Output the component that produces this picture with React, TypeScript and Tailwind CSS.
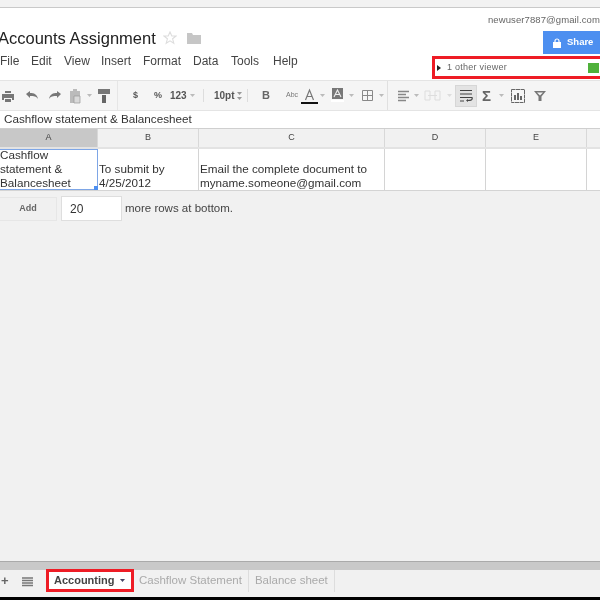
import React from "react";

const Caret = ({ c = "#999" }: { c?: string }) => (
  <svg width="5" height="3" viewBox="0 0 5 3" className="shrink-0"><path d="M0 0h5L2.5 3z" fill={c} /></svg>
);

const Ic = ({ w = 16, h = 16, children }: { w?: number; h?: number; children: React.ReactNode }) => (
  <svg width={w} height={h} viewBox={`0 0 ${w} ${h}`} className="shrink-0">{children}</svg>
);

const menus = [
  ["File", "w-[31px]"],
  ["Edit", "w-[33px]"],
  ["View", "w-[37px]"],
  ["Insert", "w-[42px]"],
  ["Format", "w-[50px]"],
  ["Data", "w-[38px]"],
  ["Tools", "w-[42px]"],
  ["Help", "w-[30px]"],
];

function Toolbar() {
  return (
    <div className="h-[30px] bg-[#f5f5f5] border-t border-[#e4e4e4] flex items-center text-[#555] font-bold text-[10px]">
      <div className="w-[118px] h-full flex items-center pl-[1px] border-r border-[#e6e6e6]">
        <div className="w-[24px]"><Ic w={14} h={14}><path d="M4 2h6v2H4zM1 5h12v6h-2V9H3v2H1zM4 10h6v3H4z" fill="#777" /></Ic></div>
        <div className="w-[23px]"><Ic w={14} h={12}><path d="M1 4l4-3v2c4 0 7 1 8 6-2-3-4-3-8-3v2z" fill="#777" /></Ic></div>
        <div className="w-[21px]"><Ic w={14} h={12}><path d="M13 4L9 1v2C5 3 2 4 1 9c2-3 4-3 8-3v2z" fill="#777" /></Ic></div>
        <div className="w-[18px]"><Ic w={12} h={16}><path d="M1 3h3V1h4v2h3v12H1z" fill="#bbb" /><path d="M5 8h6v7H5z" fill="#d9d9d9" stroke="#999" strokeWidth="0.7" /></Ic></div>
        <div className="w-[11px]"><Caret c="#bbb" /></div>
        <Ic w={13} h={16}><path d="M0 1h12v5H0z" fill="#777" /><path d="M4 7h4v8H4z" fill="#666" /></Ic>
      </div>
      <div className="w-[85px] h-full flex items-center pl-[15px]">
        <span className="w-[21px] text-[9px]">$</span>
        <span className="w-[16px] text-[9px]">%</span>
        <span className="w-[20px]">123</span>
        <Caret c="#bbb" />
      </div>
      <div className="w-[45px] h-[13px] flex items-center pl-[10px] border-l border-[#ddd] border-r gap-[2px]">
        <span>10pt</span>
        <span className="flex flex-col gap-[2px]"><Caret /><Caret /></span>
      </div>
      <div className="w-[32px] pl-[14px]">
        <span className="text-[11px] text-[#666]">B</span>
      </div>
      <div className="w-[20px] pl-[6px] text-[7px] font-normal text-[#777]">Abc</div>
      <div className="w-[18px] h-[18px] flex flex-col items-center">
        <Ic w={17} h={15}><path d="M4.500 13L8.500 3 12.500 13M6 9.500h5" fill="none" stroke="#777" strokeWidth="1.200" /></Ic>
        <div className="w-[17px] h-[2px] bg-[#111]" />
      </div>
      <div className="w-[12px] pl-[2px] flex"><Caret c="#bbb" /></div>
      <div className="w-[16px] pl-[1px] pb-[3px]">
        <Ic w={15} h={15}>
          <path d="M1 1h11v11H1z" fill="#777" />
          <path d="M3 10L6.500 3 10 10M4.500 7.500h4" fill="none" stroke="#eee" strokeWidth="1.100" />
          <path d="M0 13h13v2H0z" fill="#fff" />
        </Ic>
      </div>
      <div className="w-[14px] pl-[3px] flex"><Caret c="#bbb" /></div>
      <div className="w-[15px] pl-[1px]">
        <Ic w={13} h={13}><path d="M1.500 1.500h10v10h-10zM6.500 1.500v10M1.500 6.500h10" fill="none" stroke="#888" strokeWidth="1" /></Ic>
      </div>
      <div className="w-[13px] h-full flex items-center border-r border-[#e0e0e0] pl-[4px]"><Caret c="#bbb" /></div>
      <div className="w-[22px] pl-[9px]">
        <Ic w={13} h={12}><path d="M1 1.500h11M1 4.500h8M1 7.500h11M1 10.500h8" stroke="#888" strokeWidth="1.300" /></Ic>
      </div>
      <div className="w-[14px] pl-[4px] flex"><Caret c="#bbb" /></div>
      <div className="w-[18px]">
        <Ic w={17} h={11}><path d="M1 1h5v9H1zM11 1h5v9h-5z" fill="none" stroke="#ddd" /><path d="M4 5.500h9" stroke="#ddd" /></Ic>
      </div>
      <div className="w-[13px] pl-[5px] flex"><Caret c="#ddd" /></div>
      <div className="w-[22px] h-[22px] bg-[#e3e3e3] border border-[#d6d6d6] flex items-center justify-center">
        <Ic w={14} h={14}><path d="M1 1.500h12M1 5h12M1 8.500h12c1 3-2 3-5 3M1 12h4" fill="none" stroke="#444" strokeWidth="1.200" /><path d="M9 10v3l-2-1.500z" fill="#444" /></Ic>
      </div>
      <div className="w-[17px] pl-[5px] text-[15px] leading-none text-[#666]">Σ</div>
      <div className="w-[14px] flex pl-[5px]"><Caret c="#bbb" /></div>
      <div className="w-[18px] pl-[2px]">
        <Ic w={16} h={16}>
          <path d="M1.500 1.500h13v13h-13z" fill="none" stroke="#666" strokeDasharray="4 0.500" />
          <path d="M4 7h2v5H4zM7 5h2v7H7zM10 8h2v4h-2z" fill="#666" />
        </Ic>
      </div>
      <div className="pl-[7px]">
        <Ic w={14} h={14}><path d="M1 2h12L8.500 7.500V12h-3V7.500z" fill="#777" /><path d="M4 3.500h6L7 6.500z" fill="#f5f5f5" /></Ic>
      </div>
    </div>
  );
}

const cols = [
  { k: "A", w: "w-[98px]" },
  { k: "B", w: "w-[101px]" },
  { k: "C", w: "w-[186px]" },
  { k: "D", w: "w-[101px]" },
  { k: "E", w: "w-[101px]" },
];

export default function App() {
  return (
    <div className="w-[600px] h-[600px] overflow-hidden flex flex-col bg-[#f1f1f1] text-[#333] blur-[0.35px] font-['Liberation_Sans',Arial,sans-serif]">
      <div className="h-[8px] shrink-0 bg-[#f2f2f2] border-b border-[#c9c9c9]" />
      <div className="h-[71px] shrink-0 bg-white flex justify-between">
        <div className="flex flex-col pt-[19px]">
          <div className="flex items-center h-[22px] -ml-[2px]">
            <span className="text-[16.500px] leading-[22px] text-[#222] whitespace-nowrap">Accounts Assignment</span>
            <svg width="14" height="14" viewBox="0 0 14 14" className="ml-[7px]"><path d="M7 1l1.800 4h4.200l-3.400 2.800 1.200 4.400L7 9.800 3.200 12.200l1.200-4.400L1 5h4.200z" fill="none" stroke="#ddd" strokeWidth="1.100" /></svg>
            <svg width="14" height="12" viewBox="0 0 14 12" className="ml-[10px]"><path d="M0 1h5l1 2h8v9H0z" fill="#c6c6c6" /></svg>
          </div>
          <div className="flex mt-[5px] text-[12px] leading-[14px] text-[#444]">
            {menus.map(([m, w]) => (
              <span key={m} className={w}>{m}</span>
            ))}
          </div>
        </div>
        <div className="w-[168px] flex flex-col items-end">
          <div className="text-[9.500px] leading-[12px] mt-[6px] text-[#666] tracking-[0.1px] whitespace-nowrap">newuser7887@gmail.com</div>
          <div className="mt-[5px] w-[57px] h-[23px] shrink-0 bg-[#4d8ff0] text-white font-bold text-[9.500px] flex items-center gap-[6px] pl-[10px]">
            <svg width="8" height="10" viewBox="0 0 8 10"><path d="M2 4V3a2 2 0 0 1 4 0v1" fill="none" stroke="#fff" strokeWidth="1.200" /><path d="M0 4h8v6H0z" fill="#fff" /></svg>
            Share
          </div>
          <div className="mt-[2px] w-[172px] -mr-[4px] h-[23px] shrink-0 border-[3px] border-[#ee1c25] flex items-center justify-between pl-[2px] pr-[2px] bg-white text-[9px] text-[#666]">
            <div className="flex items-center tracking-[0.25px]">
              <svg width="4" height="6" viewBox="0 0 4 6"><path d="M0 0l4 3-4 3z" fill="#222" /></svg>
              <span className="ml-[6px]">1 other viewer</span>
            </div>
            <div className="w-[11px] h-[10px] bg-[#4fb13b]" />
          </div>
        </div>
      </div>
      <div className="h-px shrink-0 bg-white" />
      <Toolbar />
      <div className="h-[18px] shrink-0 bg-white border-t border-[#e4e4e4] pl-[4px] text-[11.700px] leading-[16px] text-[#333]">
        Cashflow statement &amp; Balancesheet
      </div>
      <div className="shrink-0 flex h-[21px] bg-[#f1f1f1] border-t border-[#cfcfcf] border-b-2 border-b-[#e3e3e3]">
        {cols.map((c, i) => (
          <div key={c.k} className={`${c.w} shrink-0 flex items-center justify-center text-[9px] text-[#444] border-r border-[#d8d8d8] ${i === 0 ? "bg-[#c8c8c8]" : ""}`}>
            {c.k}
          </div>
        ))}
      </div>
      <div className="shrink-0 flex h-[42px] bg-white border-b border-[#d4d4d4] text-[11.700px] leading-[14px] text-[#333]">
        <div className="w-[98px] shrink-0 relative border border-l-0 border-[#7ea6e6] whitespace-nowrap">
          <div className="-mt-[2px]">Cashflow<br />statement &amp;<br />Balancesheet</div>
          <div className="absolute -right-[1px] -bottom-[1px] w-[4px] h-[4px] bg-[#4d8ff0]" />
        </div>
        <div className="w-[101px] shrink-0 border-r border-[#d4d4d4] pl-[1px] flex flex-col justify-end">
          <span>To submit by</span><span>4/25/2012</span>
        </div>
        <div className="w-[186px] shrink-0 border-r border-[#d4d4d4] pl-[1px] flex flex-col justify-end whitespace-nowrap">
          <span>Email the complete document to</span><span>myname.someone@gmail.com</span>
        </div>
        <div className="w-[101px] shrink-0 border-r border-[#d4d4d4]" />
        <div className="w-[101px] shrink-0 border-r border-[#d4d4d4]" />
      </div>
      <div className="shrink-0 flex items-center h-[25px] mt-[5px] text-[11.500px] text-[#444]">
        <div className="w-[57px] h-[24px] bg-[#f0f0f0] border border-[#e6e6e6] border-l-0 flex items-center justify-center font-bold text-[9px] text-[#666]">Add</div>
        <div className="ml-[4px] w-[61px] h-[25px] bg-white border border-[#dedede] pl-[8px] flex items-center text-[12px] text-[#333]">20</div>
        <span className="ml-[3px]">more rows at bottom.</span>
      </div>
      <div className="flex-1" />
      <div className="h-[9px] shrink-0 bg-[#c9c9c9] border-t border-[#aaa]" />
      <div className="h-[27px] shrink-0 bg-[#f1f1f1] flex items-start text-[11.500px]">
        <span className="w-[22px] pl-[1px] text-[#666] text-[13px] leading-[22px] font-bold">+</span>
        <div className="w-[24px] pt-[7px]">
          <svg width="11" height="10" viewBox="0 0 11 10"><path d="M0 1h11M0 3.500h11M0 6h11M0 8.500h11" stroke="#777" strokeWidth="1.300" /></svg>
        </div>
        <div className="w-[88px] h-[23px] border-[3px] border-[#ee1c25] bg-white -mt-px flex items-center pl-[5px] gap-[5px] font-bold text-[11px] text-[#444] whitespace-nowrap">
          Accounting
          <Caret c="#446" />
        </div>
        <div className="h-[22px] flex items-center pl-[5px] pr-[6px] text-[#aaa] border-r border-[#ddd] whitespace-nowrap">Cashflow Statement</div>
        <div className="h-[22px] flex items-center pl-[6px] pr-[6px] text-[#aaa] border-r border-[#ddd] whitespace-nowrap">Balance sheet</div>
      </div>
      <div className="h-[3px] shrink-0 bg-black" />
    </div>
  );
}
